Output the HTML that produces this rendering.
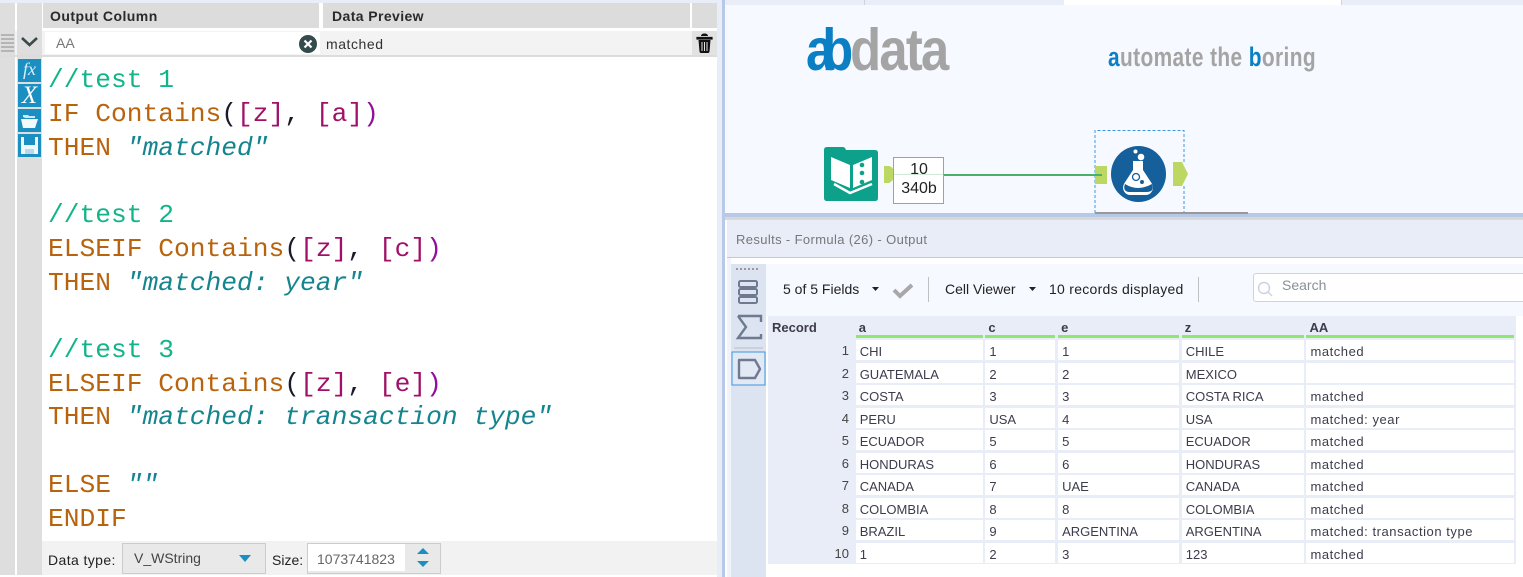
<!DOCTYPE html>
<html><head><meta charset="utf-8">
<style>
html,body{margin:0;padding:0}
body{width:1523px;height:577px;overflow:hidden;position:relative;background:#fff;font-family:"Liberation Sans",sans-serif;color:#333}
.a{position:absolute}
.t{position:absolute;white-space:nowrap;font-size:14px;line-height:18px}
.code{position:absolute;left:48px;font-family:"Liberation Mono",monospace;font-size:26.25px;line-height:34px;white-space:pre;height:34px}
.k{color:#b8640f}.c{color:#12b58a}.s{color:#14858f;font-style:italic}.f{color:#b8640f}.b{color:#a01068}.p{color:#1a1a2a}.m{color:#90109a}
.grid{position:absolute;left:768px;top:318px;display:grid;grid-template-columns:85px 127px 70px 121px 122px 208px;grid-auto-rows:19.9px;gap:2.6px 2.7px;font-size:13px}
.grid div{background:#fff;line-height:24px;padding-left:4px;color:#3c3c4c;white-space:nowrap;overflow:hidden}
.grid .h{background:#e9edf8;font-weight:bold;height:17px;border-bottom:3px solid #8ee86e;line-height:20px;padding-left:3px}
.grid .r{background:#e9edf8;text-align:right;padding:0 4px 0 0;color:#444;line-height:22px}
.grid .rh{background:#e9edf8;font-weight:bold;line-height:20px;padding-left:4px}
.grid .w{letter-spacing:.55px}
</style></head>
<body>
<!-- left panel -->
<div class="a" style="left:0;top:0;width:725px;height:3px;background:#e8edf8"></div>
<div class="a" style="left:0;top:3px;width:15px;height:572px;background:#dedede"></div>
<div class="a" style="left:17px;top:3px;width:25px;height:572px;background:#dedede"></div>
<div class="a" style="left:43px;top:3px;width:276px;height:25px;background:#dcdcdc"></div>
<div class="a" style="left:323px;top:3px;width:367px;height:25px;background:#dcdcdc"></div>
<div class="a" style="left:692px;top:3px;width:25px;height:25px;background:#dcdcdc"></div>
<div class="t" style="left:50px;top:7px;font-weight:bold;font-size:14px;color:#2a2a2a;letter-spacing:.45px">Output Column</div>
<div class="t" style="left:332px;top:7px;font-weight:bold;font-size:14px;color:#2a2a2a;letter-spacing:.4px">Data Preview</div>
<div class="a" style="left:0;top:31px;width:717px;height:26px;background:#f3f3f3;border-bottom:0"></div>
<div class="a" style="left:0;top:55px;width:717px;height:2px;background:#dcdcdc"></div>
<div class="a" style="left:0;top:31px;width:15px;height:24px;background:#dedede"></div>
<div class="a" style="left:1px;top:34px;width:13px;height:2px;background:#b5b5b5;box-shadow:0 4px 0 #b5b5b5,0 8px 0 #b5b5b5,0 12px 0 #b5b5b5,0 16px 0 #b5b5b5"></div>
<div class="a" style="left:17px;top:31px;width:25px;height:24px;background:#dedede"></div>
<svg class="a" style="left:20px;top:36px" width="20" height="14"><path d="M2 2 L9.500 9 L17 2" fill="none" stroke="#3a4a4a" stroke-width="2.600"/></svg>
<div class="a" style="left:45px;top:32px;width:275px;height:22px;background:#fff"></div>
<div class="t" style="left:56px;top:34px;font-size:14px;color:#777">AA</div>
<svg class="a" style="left:299px;top:35px" width="18" height="18"><circle cx="9" cy="9" r="9" fill="#354a4a"/><path d="M5.500 5.500L12.500 12.500M12.500 5.500L5.500 12.500" stroke="#fff" stroke-width="2.200"/></svg>
<div class="t" style="left:326px;top:35px;font-size:14px;color:#333;letter-spacing:.55px">matched</div>
<div class="a" style="left:692px;top:31px;width:25px;height:24px;background:#e2e2e2"></div>
<svg class="a" style="left:695px;top:32px" width="19" height="22" viewBox="0 0 19 22"><path d="M2 5.500h15v1.500H2zM6.500 4C7 1.500 12 1.500 12.500 4" fill="#111" stroke="#111" stroke-width="1.200"/><path d="M3.500 8h12l-1 11.500q-.2 1.500-1.500 1.500H6q-1.300 0-1.500-1.500z" fill="#111"/><path d="M7 10v9M9.500 10v9M12 10v9" stroke="#e2e2e2" stroke-width="1"/></svg>

<!-- formula icons -->
<div class="a" style="left:18px;top:59px;width:23px;height:23px;background:#1b8fc2;color:#d8eef8;font:italic 18px/21px 'Liberation Serif',serif;text-align:center">fx</div>
<div class="a" style="left:18px;top:84px;width:23px;height:23px;background:#1b8fc2;color:#fff;font:italic 25px/23px 'Liberation Serif',serif;text-align:center">X</div>
<div class="a" style="left:18px;top:109px;width:23px;height:23px;background:#1b8fc2"><svg width="23" height="23"><path d="M5 8V6h5l1 1h6v2H7z" fill="#cfe8f4"/><path d="M3 10h17l-3 9H5z" fill="#f2fafd"/></svg></div>
<div class="a" style="left:18px;top:134px;width:23px;height:23px;background:#1b8fc2"><svg width="23" height="23"><path d="M3 3h17v17H3z" fill="#eef7fb"/><path d="M6 3h11v8H6z" fill="#1b8fc2"/><path d="M7 15h9v5H7z" fill="#bcd8e6"/></svg></div>

<!-- code -->
<div class="code c" style="top:63px">//test 1</div>
<div class="code" style="top:97px"><span class="k">IF Contains</span><span class="p">(</span><span class="b">[z]</span><span class="p">, </span><span class="b">[a]</span><span class="m">)</span></div>
<div class="code" style="top:131px"><span class="k">THEN</span> <span class="s">"matched"</span></div>
<div class="code c" style="top:198px">//test 2</div>
<div class="code" style="top:232px"><span class="k">ELSEIF Contains</span><span class="p">(</span><span class="b">[z]</span><span class="p">, </span><span class="b">[c]</span><span class="m">)</span></div>
<div class="code" style="top:266px"><span class="k">THEN</span> <span class="s">"matched: year"</span></div>
<div class="code c" style="top:333px">//test 3</div>
<div class="code" style="top:367px"><span class="k">ELSEIF Contains</span><span class="p">(</span><span class="b">[z]</span><span class="p">, </span><span class="b">[e]</span><span class="m">)</span></div>
<div class="code" style="top:400px"><span class="k">THEN</span> <span class="s">"matched: transaction type"</span></div>
<div class="code" style="top:468px"><span class="k">ELSE</span> <span class="s">""</span></div>
<div class="code k" style="top:502px">ENDIF</div>

<!-- bottom bar -->
<div class="a" style="left:42px;top:541px;width:675px;height:34px;background:#f2f2f2"></div>
<div class="t" style="left:48px;top:551px;font-size:14px;color:#222;letter-spacing:.4px">Data type:</div>
<div class="a" style="left:122px;top:543px;width:142px;height:29px;background:#e9e9e9;border:1px solid #ccc"></div>
<div class="t" style="left:134px;top:549px;font-size:14px;color:#444">V_WString</div>
<svg class="a" style="left:238px;top:554px" width="14" height="9"><path d="M1 1h12L7 8z" fill="#1b8fc2"/></svg>
<div class="t" style="left:272px;top:551px;font-size:14px;color:#222">Size:</div>
<div class="a" style="left:307px;top:543px;width:132px;height:29px;background:#e9e9e9;border:1px solid #ccc"></div>
<div class="a" style="left:308px;top:544px;width:97px;height:27px;background:#fff"></div>
<div class="t" style="left:317px;top:550px;font-size:14px;color:#666">1073741823</div>
<svg class="a" style="left:414px;top:546px" width="18" height="24"><path d="M3 8L9 2L15 8z" fill="#1b8fc2"/><path d="M3 15h12L9 21z" fill="#1b8fc2"/></svg>

<!-- splitter -->
<div class="a" style="left:717px;top:0;width:5px;height:577px;background:#e8edf8"></div>
<div class="a" style="left:722px;top:0;width:3px;height:577px;background:#b8c9e8"></div>

<!-- canvas -->
<div class="a" style="left:725px;top:0;width:798px;height:213px;background:#f6f9ff"></div>
<div class="a" style="left:725px;top:0;width:798px;height:5px;background:#e8edf8"></div>
<div class="a" style="left:864px;top:0;width:1px;height:5px;background:#ccd3e4"></div>
<div class="a" style="left:1064px;top:0;width:277px;height:5px;background:#fff"></div>
<div class="a" style="left:1341px;top:0;width:1px;height:5px;background:#ccd3e4"></div>

<div class="a" style="left:806px;top:15px;font:59px/70px 'Liberation Sans',sans-serif;white-space:nowrap;transform:scaleX(.86);transform-origin:left top"><span style="color:#0b7fc4;font-weight:bold;letter-spacing:-14px">a</span><span style="color:#0b7fc4;font-weight:bold;letter-spacing:-3.600px">b</span><span style="color:#a4a4a4;font-weight:bold;letter-spacing:-2px">data</span></div>
<div class="a" style="left:1108px;top:41px;font:bold 27px/32px 'Liberation Sans',sans-serif;color:#a4a4a4;white-space:nowrap;transform:scaleX(.773);transform-origin:left top;letter-spacing:.5px"><span style="color:#0b7fc4">a</span>utomate the <span style="color:#0b7fc4">b</span>oring</div>

<!-- workflow -->
<svg class="a" style="left:820px;top:125px" width="400" height="90" viewBox="820 125 400 90">
<path d="M824 150q0-3 3-3h16q2 0 3 3h29q3 0 3 3v45q0 3-3 3h-48q-3 0-3-3z" fill="#0da08a"/>
<path d="M831 157l19 8v23l-19-8z" fill="#fff"/>
<path d="M853 165l19-8v23l-19 8z" fill="#fff"/>
<circle cx="862" cy="165" r="2.300" fill="#0da08a"/><circle cx="862" cy="173" r="2.300" fill="#0da08a"/><circle cx="862" cy="182" r="2.300" fill="#0da08a"/>
<path d="M834 184l16 9 22-9" fill="none" stroke="#fff" stroke-width="2.500"/>
<path d="M884 166h5q5 1 5 8q0 7-5 9h-5z" fill="#bcd862"/>
<line x1="944" y1="175" x2="1102" y2="175" stroke="#46b06c" stroke-width="2"/>
<path d="M1095 213V130.500H1184V163M1184 186V213" fill="none" stroke="#3d96e0" stroke-width="1" stroke-dasharray="3 2"/>
<rect x="1095" y="166" width="12" height="18" fill="#bcd862"/>
<line x1="1095" y1="175" x2="1102" y2="175" stroke="#46b06c" stroke-width="2"/>
<ellipse cx="1138.500" cy="174" rx="27.500" ry="28" fill="#155f9b"/>
<path d="M1133 161h10v9l8.500 13q3 5 0 9q-2 3-6 3h-15q-4 0-6-3q-3-4 0-9l8.500-13z" fill="#fff"/>
<path d="M1125 184q13 8 27 0q2 5-1 7q-2 1-4 1h-18q-2 0-3-1q-3-2-1-7z" fill="#155f9b"/>
<circle cx="1136" cy="177" r="3.500" fill="none" stroke="#155f9b" stroke-width="1.300"/><circle cx="1142" cy="182" r="2" fill="#155f9b"/>
<circle cx="1141" cy="157" r="3.300" fill="#fff"/><circle cx="1135.500" cy="151.500" r="2" fill="#fff"/>
<path d="M1173 162h9l6 12-6 12h-9z" fill="#bcd862"/>
</svg>
<div class="a" style="left:893px;top:157px;width:48.500px;height:44.500px;background:#fff;border:1.500px solid #a0a0a0"></div>
<div class="a" style="left:894px;top:174px;width:49px;height:1px;background:#cfe8d8"></div>
<div class="t" style="left:894px;top:160px;width:50px;text-align:center;font-size:16px;color:#222;line-height:19px">10</div>
<div class="t" style="left:894px;top:179px;width:50px;text-align:center;font-size:16px;color:#222;line-height:19px">340b</div>

<div class="a" style="left:725px;top:213px;width:798px;height:4px;background:#b8c9e8"></div>
<div class="a" style="left:1095px;top:212px;width:153px;height:2px;background:#999"></div>
<div class="a" style="left:725px;top:217px;width:798px;height:3px;background:#d8d8d8"></div>

<!-- results -->
<div class="a" style="left:725px;top:220px;width:798px;height:357px;background:#fff"></div>
<div class="a" style="left:727px;top:220px;width:796px;height:37px;background:#e9edf8;border-bottom:1px solid #c8c8c8"></div>
<div class="t" style="left:736px;top:231px;font-size:13px;color:#777;letter-spacing:.37px">Results - Formula (26) - Output</div>
<div class="a" style="left:727px;top:258px;width:796px;height:319px;background:#fff"></div>
<div class="a" style="left:727px;top:258px;width:4px;height:319px;background:#f0f3fa"></div>
<div class="a" style="left:731px;top:264px;width:35px;height:313px;background:#dce3f1"></div>
<div class="a" style="left:766px;top:264px;width:757px;height:52px;background:#f6f9ff"></div>
<div class="a" style="left:736px;top:268px;width:24px;height:2px;background-image:repeating-linear-gradient(90deg,#999 0 2px,transparent 2px 4px)"></div>
<svg class="a" style="left:731px;top:278px" width="35" height="110" viewBox="0 0 35 110">
<g fill="none" stroke="#6e7a90" stroke-width="2"><rect x="8" y="3" width="18" height="6" rx="1.500"/><rect x="8" y="11" width="18" height="6" rx="1.500"/><rect x="8" y="19" width="18" height="6" rx="1.500"/>
<path d="M7 38h23v6M30 56v4H7l8-11-8-11" stroke-width="2.400"/></g>
<line x1="3" y1="70" x2="32" y2="70" stroke="#b8bfcc"/>
<rect x="1" y="74" width="33" height="33" fill="#e3e9f4" stroke="#3d96e0" stroke-width="1"/>
<path d="M8 82h16l5 9-5 9H8z" fill="none" stroke="#6e7a90" stroke-width="2.400" stroke-linejoin="round"/></svg>
<div class="t" style="left:783px;top:280px;font-size:14px;color:#222">5 of 5 Fields</div>
<svg class="a" style="left:871px;top:286px" width="10" height="6"><path d="M1 1h7L4.500 5z" fill="#222"/></svg>
<svg class="a" style="left:892px;top:281px" width="23" height="18"><path d="M2 9l6 6L20 4" fill="none" stroke="#a8a8a8" stroke-width="4"/></svg>
<div class="a" style="left:928px;top:277px;width:1px;height:25px;background:#c0c0c0"></div>
<div class="t" style="left:945px;top:280px;font-size:14px;color:#222">Cell Viewer</div>
<svg class="a" style="left:1028px;top:286px" width="10" height="6"><path d="M1 1h7L4.500 5z" fill="#222"/></svg>
<div class="t" style="left:1049px;top:280px;font-size:14px;color:#222;letter-spacing:.27px">10 records displayed</div>
<div class="a" style="left:1198px;top:277px;width:1px;height:25px;background:#c0c0c0"></div>
<div class="a" style="left:1253px;top:273px;width:280px;height:27px;background:#fff;border:1px solid #ccd3e6;border-radius:3px"></div>
<svg class="a" style="left:1256px;top:280px" width="20" height="20"><circle cx="8" cy="8" r="5.500" fill="none" stroke="#ccd3e0" stroke-width="1.500"/><path d="M12 12l4 4" stroke="#ccd3e0" stroke-width="1.500"/></svg>
<div class="t" style="left:1282px;top:276px;font-size:14px;color:#8a8f99">Search</div>

<div class="a" style="left:768px;top:316px;width:748px;height:248px;background:#e9edf8"></div>
<div class="grid">
<div class="rh">Record</div><div class="h">a</div><div class="h">c</div><div class="h">e</div><div class="h">z</div><div class="h">AA</div>
<div class="r">1</div><div>CHI</div><div>1</div><div>1</div><div>CHILE</div><div class="w">matched</div>
<div class="r">2</div><div>GUATEMALA</div><div>2</div><div>2</div><div>MEXICO</div><div></div>
<div class="r">3</div><div>COSTA</div><div>3</div><div>3</div><div>COSTA RICA</div><div class="w">matched</div>
<div class="r">4</div><div>PERU</div><div>USA</div><div>4</div><div>USA</div><div class="w">matched: year</div>
<div class="r">5</div><div>ECUADOR</div><div>5</div><div>5</div><div>ECUADOR</div><div class="w">matched</div>
<div class="r">6</div><div>HONDURAS</div><div>6</div><div>6</div><div>HONDURAS</div><div class="w">matched</div>
<div class="r">7</div><div>CANADA</div><div>7</div><div>UAE</div><div>CANADA</div><div class="w">matched</div>
<div class="r">8</div><div>COLOMBIA</div><div>8</div><div>8</div><div>COLOMBIA</div><div class="w">matched</div>
<div class="r">9</div><div>BRAZIL</div><div>9</div><div>ARGENTINA</div><div>ARGENTINA</div><div class="w">matched: transaction type</div>
<div class="r">10</div><div>1</div><div>2</div><div>3</div><div>123</div><div class="w">matched</div>
</div>
</body></html>
